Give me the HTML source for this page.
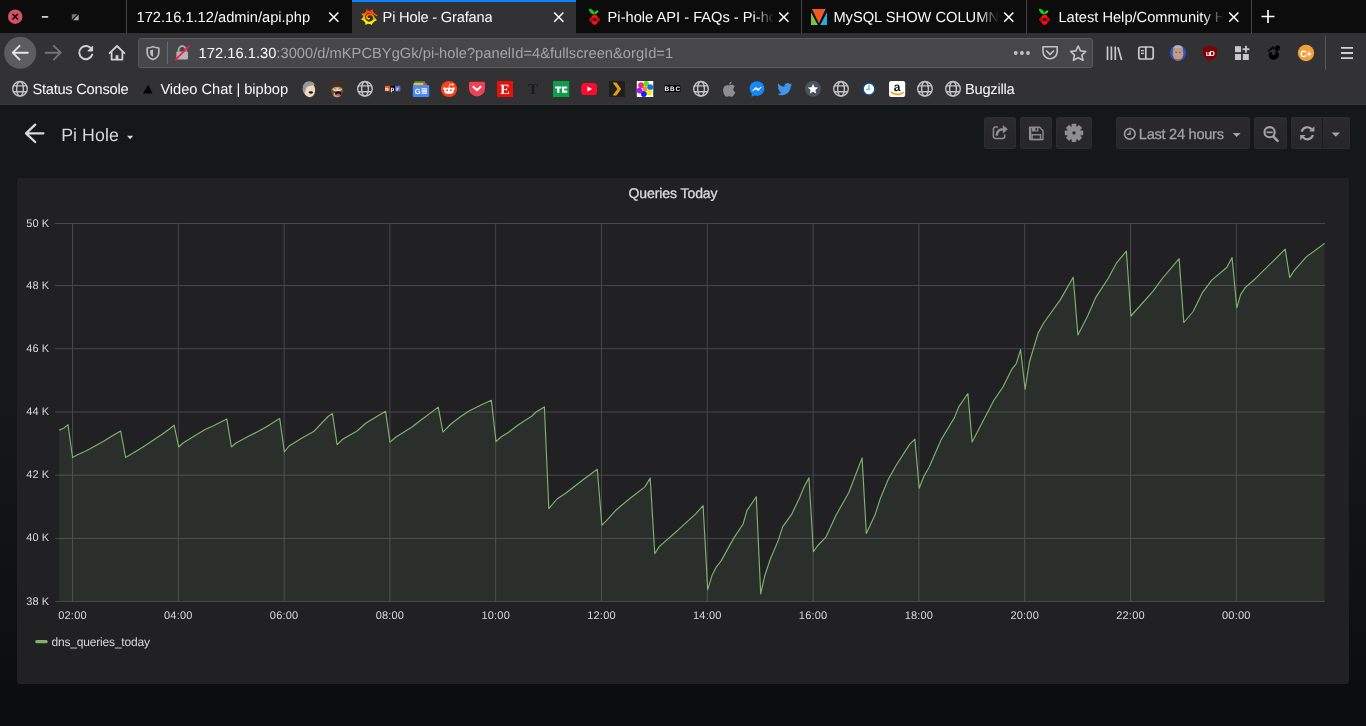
<!DOCTYPE html>
<html lang="en">
<head>
<meta charset="utf-8">
<title>Pi Hole - Grafana</title>
<style>
*{box-sizing:border-box;margin:0;padding:0}
html,body{width:1366px;height:726px;overflow:hidden;background:#0b0c0e}
body{position:relative;font-family:"Liberation Sans",sans-serif;color:#f9f9fa;-webkit-font-smoothing:antialiased;text-rendering:geometricPrecision}
#root{position:absolute;left:0;top:0;width:1366px;height:726px;will-change:transform}
.abs{position:absolute}
svg{position:absolute;overflow:visible}
/* ---------- Firefox chrome ---------- */
#tabbar{position:absolute;left:0;top:0;width:1366px;height:33px;background:#0c0c0d}
#navbar{position:absolute;left:0;top:33px;width:1366px;height:72px;background:#323234;border-bottom:1px solid #38383a}
#chromeline{position:absolute;left:0;top:105px;width:1366px;height:1px;background:#0c0c0d}
.tabsep{position:absolute;top:0;width:1px;height:33px;background:#454547}
.tab{position:absolute;top:0;height:33px;width:225px}
.tab.sel{background:#323234;width:224px}
.fade{-webkit-mask-image:linear-gradient(90deg,#000 0,#000 146px,transparent 166px);mask-image:linear-gradient(90deg,#000 0,#000 146px,transparent 166px)}
.tab.sel:before{content:"";position:absolute;left:0;top:0;width:100%;height:2px;background:#0a84ff}
.tt{position:absolute;top:9px;font-size:14.67px;line-height:19px;white-space:nowrap;color:#f9f9fa;overflow:hidden}
.tx{position:absolute;top:12px;width:10px;height:10px}
.ui{font-size:14.67px;line-height:19px;white-space:nowrap;color:#f9f9fa;position:absolute}
#urlbar{position:absolute;left:138px;top:5px;width:955px;height:30px;background:#474749;border:1px solid #5b5b5d;border-radius:3px}
/* ---------- Grafana ---------- */
#page{position:absolute;left:0;top:105px;width:1366px;height:621px;background:linear-gradient(180deg,#161719 0px,#161719 300px,#0b0c0e 621px)}
.gbtn{position:absolute;top:12px;height:32px;border:1px solid #2c2c2f;border-radius:2px;background:linear-gradient(180deg,#2b2b2e,#262628)}
#panel{position:absolute;left:17px;top:73px;width:1332px;height:506px;background:#212124;border-radius:3px}
.g{font-family:"Liberation Sans",sans-serif;color:#d8d9da;white-space:nowrap;position:absolute}
.yl{position:absolute;right:1317px;font-size:11px;line-height:13px;color:#d8d9da;white-space:nowrap}
.xl{position:absolute;width:60px;text-align:center;top:503px;font-size:11px;line-height:13px;letter-spacing:0.2px;color:#d8d9da;white-space:nowrap}
</style>
</head>
<body>
<div id="root">
<!-- ======= Firefox tab bar ======= -->
<div id="tabbar">
  <!-- window controls -->
  <svg width="126" height="33" viewBox="0 0 126 33" style="left:0;top:0">
    <circle cx="15.2" cy="16.7" r="7.2" fill="#d5525f"/>
    <path d="M12.4 13.9l5.6 5.6M18 13.9l-5.6 5.6" stroke="#1a0d10" stroke-width="1.7" fill="none"/>
    <rect x="41.8" y="16" width="6.4" height="1.8" fill="#c9c9ca"/>
    <path d="M71.8 19.8v-5.6h5.6z" fill="#77777a"/>
    <path d="M78.4 14.2v5.6h-5.6z" fill="#aaaaac" transform="translate(0.2,0.4)"/>
  </svg>
  <div class="tabsep" style="left:126px"></div>
  <div class="tab" style="left:127px"><span class="tt" style="left:9.5px">172.16.1.12/admin/api.php</span></div>
  <div class="tab sel" style="left:352px"><span class="tt" style="left:30.6px;letter-spacing:-0.2px">Pi Hole - Grafana</span></div>
  <div class="tab" style="left:577px"><span class="tt fade" style="left:30.6px;width:165px">Pi-hole API - FAQs - Pi-hole</span></div>
  <div class="tabsep" style="left:801px"></div>
  <div class="tab" style="left:802px"><span class="tt fade" style="left:31.4px;width:165px">MySQL SHOW COLUMNS FROM</span></div>
  <div class="tabsep" style="left:1026px"></div>
  <div class="tab" style="left:1027px"><span class="tt fade" style="left:31.4px;width:165px">Latest Help/Community Help</span></div>
  <div class="tabsep" style="left:1251px"></div>
</div>
<!-- ======= nav bar + bookmarks ======= -->
<div id="navbar">
  <div id="urlbar"></div>
  <span class="ui" style="left:198.6px;top:11.6px;letter-spacing:0.03px">172.16.1.30<span style="color:#a5a5a7">:3000/d/mKPCBYgGk/pi-hole?panelId=4&amp;fullscreen&amp;orgId=1</span></span>
  <span class="ui" style="left:32.4px;top:48px;letter-spacing:-0.25px">Status Console</span>
  <span class="ui" style="left:160.4px;top:48px;letter-spacing:-0.03px">Video Chat | bipbop</span>
  <span class="ui" style="left:965px;top:48px;letter-spacing:-0.25px">Bugzilla</span>
</div>
<div id="chromeline"></div>
<!--CHROMEICONS--><svg id="chromeicons" width="1366" height="105" viewBox="0 0 1366 105" style="left:0;top:0">
  <defs>
    <linearGradient id="grafg" gradientUnits="userSpaceOnUse" x1="0" y1="9" x2="0" y2="25">
      <stop offset="0" stop-color="#ff3300"/><stop offset="0.22" stop-color="#ff4a00"/><stop offset="0.5" stop-color="#ff9a00"/><stop offset="0.68" stop-color="#ffe800"/><stop offset="1" stop-color="#fff200"/>
    </linearGradient>
  </defs>
  <!-- tab favicons -->
  <g>
    <path d="M363.3 16.4L361.1 13.4L364.8 13.2ZM365.7 12.3L366.4 9.0L369.1 11.1ZM369.8 11.1L372.6 9.1L373.2 12.4ZM375.6 17.9L376.8 20.4L374.1 21.3ZM372.8 22.5L371.6 24.9L369.3 23.5ZM368.3 23.4L365.5 24.9L365.1 21.8ZM364.1 20.6L361.0 19.6L363.2 17.1Z" fill="url(#grafg)"/>
    <path d="M373.5 13.6A5.5 5.5 0 1 0 374.1 20.2" fill="none" stroke="url(#grafg)" stroke-width="2.3"/>
    <path d="M374.1 20.2 L374.0 17.7 L372.9 15.7 L371.1 14.4 L369.1 14.2 L367.5 15.1 L366.8 16.6 L367.1 18.1 L368.3 18.9 L369.3 18.6" fill="none" stroke="url(#grafg)" stroke-width="1.6" stroke-linejoin="round" stroke-linecap="round"/>
    <path d="M373.4 13.4Q375.2 14.2 376.8 15.7" fill="none" stroke="url(#grafg)" stroke-width="1.1" stroke-linecap="round"/>
  </g>
  <g transform="translate(594.6,17)">
      <path d="M-5.700 -8.200C-3.200 -8.600 0.200 -6.200 -0.300 -3C-1.100 -2.600 -2.300 -2.800 -3.200 -3.600C-4.800 -4.800 -5.700 -6.400 -5.700 -8.200Z" fill="#0fd012"/>
      <path d="M3.700 -6.400C3.500 -4.400 2 -2.700 -0.200 -2.800C-0.700 -4.600 1.500 -6.600 3.700 -6.400Z" fill="#12f016"/>
      <path d="M0 -1.700L4.300 2.600L0 6.900L-4.300 2.600Z" fill="#c00a0c" stroke="#c00a0c" stroke-width="2.600" stroke-linejoin="round"/>
      <ellipse cx="0" cy="-0.100" rx="2.700" ry="1.900" fill="#f41216"/>
      <ellipse cx="0" cy="5.500" rx="2.700" ry="2" fill="#ff0a0e"/>
      <path d="M-1.300 1.300L1.300 3.900M1.300 1.300L-1.300 3.900" stroke="#1a0505" stroke-width="1.300"/>
    </g>
  <g transform="translate(1044.6,17)">
      <path d="M-5.700 -8.200C-3.200 -8.600 0.200 -6.200 -0.300 -3C-1.100 -2.600 -2.300 -2.800 -3.200 -3.600C-4.800 -4.800 -5.700 -6.400 -5.700 -8.200Z" fill="#0fd012"/>
      <path d="M3.700 -6.400C3.500 -4.400 2 -2.700 -0.200 -2.800C-0.700 -4.600 1.500 -6.600 3.700 -6.400Z" fill="#12f016"/>
      <path d="M0 -1.700L4.300 2.600L0 6.900L-4.300 2.600Z" fill="#c00a0c" stroke="#c00a0c" stroke-width="2.600" stroke-linejoin="round"/>
      <ellipse cx="0" cy="-0.100" rx="2.700" ry="1.900" fill="#f41216"/>
      <ellipse cx="0" cy="5.500" rx="2.700" ry="2" fill="#ff0a0e"/>
      <path d="M-1.300 1.300L1.300 3.900M1.300 1.300L-1.300 3.900" stroke="#1a0505" stroke-width="1.300"/>
    </g>
  <g transform="translate(811,9)">
    <path d="M1 0H14.6L7.9 14.6Z" fill="#f05a22"/>
    <path d="M0 3.2V16H6.8Z" fill="#7dc242"/>
    <path d="M16 3.2V16H9.2Z" fill="#29a9e0"/>
  </g>
  <!-- tab close buttons -->
  <g transform="translate(333.8,17.1)" fill="none" stroke="#f9f9fa" stroke-width="1.6">
      <path d="M-4.6 -4.6L4.6 4.6M4.6 -4.6L-4.6 4.6"/>
    </g>
  <g transform="translate(558.8,17.1)" fill="none" stroke="#f9f9fa" stroke-width="1.6">
      <path d="M-4.6 -4.6L4.6 4.6M4.6 -4.6L-4.6 4.6"/>
    </g>
  <g transform="translate(783.8,17.1)" fill="none" stroke="#f9f9fa" stroke-width="1.6">
      <path d="M-4.6 -4.6L4.6 4.6M4.6 -4.6L-4.6 4.6"/>
    </g>
  <g transform="translate(1008.8,17.1)" fill="none" stroke="#f9f9fa" stroke-width="1.6">
      <path d="M-4.6 -4.6L4.6 4.6M4.6 -4.6L-4.6 4.6"/>
    </g>
  <g transform="translate(1233.8,17.1)" fill="none" stroke="#f9f9fa" stroke-width="1.6">
      <path d="M-4.6 -4.6L4.6 4.6M4.6 -4.6L-4.6 4.6"/>
    </g>
  <!-- new tab + -->
  <path d="M1261.5 16.5H1274.5M1268 10V23" stroke="#f9f9fa" stroke-width="1.7" fill="none"/>
  <!-- nav buttons -->
  <circle cx="20.2" cy="52.7" r="16" fill="#5d5d5f"/>
  <path d="M27.8 52.7H13M19.6 45.8L12.7 52.7L19.6 59.6" fill="none" stroke="#e4e4e5" stroke-width="1.9" stroke-linejoin="round" stroke-linecap="round"/>
  <path d="M45.6 52.7H60.4M53.8 45.8L60.7 52.7L53.8 59.6" fill="none" stroke="#747476" stroke-width="1.9" stroke-linejoin="round" stroke-linecap="round"/>
  <g fill="none" stroke="#d2d2d4" stroke-width="1.9" stroke-linecap="round" stroke-linejoin="round">
    <path d="M91.6 49.2A6.6 6.6 0 1 0 92.2 54.6"/>
  </g>
  <path d="M92.600 46.200V51H87.800Z" fill="#d2d2d4" stroke="#d2d2d4" stroke-width="1" stroke-linejoin="round"/>
  <g fill="none" stroke="#d2d2d4" stroke-width="1.8" stroke-linejoin="round" stroke-linecap="round">
    <path d="M109.6 53.2L117 46L124.4 53.2"/>
    <path d="M111.6 52.4V59.6H122.4V52.4"/>
  </g>
  <rect x="115.6" y="55.2" width="2.8" height="4" fill="#d2d2d4"/>
  <!-- urlbar icons -->
  <g fill="none" stroke="#c0c0c2" stroke-width="1.6" stroke-linejoin="round">
    <path d="M153 46.6C155 47.6 157 48 158.8 48V52.4C158.8 55.8 156.4 58.4 153 59.6C149.600 58.4 147.2 55.800 147.2 52.400V48C149 48 151 47.600 153 46.600Z"/>
  </g>
  <path d="M153 49.6V56.8C151.200 55.900 150.200 54.400 150.200 52.400V50.200C151.300 50.200 152.200 50 153 49.600Z" fill="#c0c0c2"/>
  <rect x="167" y="42" width="1" height="22" fill="#5f6e8a"/>
  <g>
    <path d="M178.600 51.400V49.800A3.600 3.600 0 0 1 185.800 49.800V51.400" fill="none" stroke="#b4b4b6" stroke-width="1.7"/>
    <rect x="176.400" y="51.400" width="11.600" height="8" rx="1" fill="#b4b4b6"/>
    <path d="M175.600 59.600L188.800 46.400" stroke="#ff1747" stroke-width="1.7" stroke-linecap="round"/>
  </g>
  <circle cx="1015.8" cy="53" r="1.9" fill="#c4c4c6"/><circle cx="1021.9" cy="53" r="1.9" fill="#c4c4c6"/><circle cx="1028" cy="53" r="1.9" fill="#c4c4c6"/>
  <g fill="none" stroke="#c4c4c6" stroke-width="1.6" stroke-linejoin="round" stroke-linecap="round">
    <path d="M1043 46.800H1057.200V51.600A7.100 7.100 0 0 1 1043 51.600Z"/>
    <path d="M1046.600 51L1050.100 54.400L1053.600 51"/>
    <path d="M1078.200 46L1080.500 50.900L1085.800 51.500L1081.900 55.100L1083 60.300L1078.200 57.700L1073.400 60.300L1074.500 55.100L1070.600 51.500L1075.900 50.900Z"/>
  </g>
  <!-- toolbar icons -->
  <g fill="none" stroke="#c9c9cb" stroke-width="1.7" stroke-linecap="butt">
    <path d="M1107.500 46.400V60M1111.400 46.400V60M1115.300 46.400V60M1118 47.200L1121.600 60"/>
  </g>
  <g fill="none" stroke="#c9c9cb" stroke-width="1.7">
    <rect x="1138.800" y="47" width="14.400" height="12" rx="2"/>
    <path d="M1145.800 47V59"/>
    <path d="M1141 50.600H1144M1141 53.400H1144" stroke-width="1.100"/>
  </g>
  <g>
    <circle cx="1178" cy="53" r="8.100" fill="#2b55b8"/>
    <ellipse cx="1178" cy="53.800" rx="5.400" ry="6.700" fill="#c49a86"/>
    <path d="M1172.800 51.500C1172.800 46.500 1175 45.200 1178 45.200C1181 45.200 1183.200 46.500 1183.200 51.500C1182.600 48.700 1181 47.700 1178 47.700C1175 47.700 1173.400 48.700 1172.800 51.500Z" fill="#b9b5b2"/>
    <path d="M1175.200 58.300Q1178 60.300 1180.800 58.300L1180.300 60.300Q1178 61.600 1175.700 60.300Z" fill="#8a6f63"/>
    <path d="M1175.300 52.300h1.600M1179.100 52.300h1.600" stroke="#5a4038" stroke-width="0.900"/>
  </g>
  <g>
    <path d="M1210 45.200C1212.400 46.800 1214.600 47.400 1217 47.400V52.600C1217 56.800 1214 59.400 1210 60.800C1206 59.400 1203 56.800 1203 52.600V47.400C1205.400 47.400 1207.600 46.800 1210 45.200Z" fill="#800007"/>
    <text x="1210" y="55.600" font-family="Liberation Sans, sans-serif" font-size="7.400" font-weight="700" fill="#fff" text-anchor="middle" letter-spacing="-0.6">uD</text>
  </g>
  <g fill="#c9c9cb">
    <rect x="1235" y="46.200" width="6" height="6"/><rect x="1235" y="54" width="6" height="6"/><rect x="1242.800" y="54" width="6" height="6"/>
    <rect x="1242.600" y="48.300" width="6.800" height="1.800"/><rect x="1245.100" y="45.800" width="1.800" height="6.800"/>
  </g>
  <g fill="#000">
    <path d="M1274.200 51.200C1278.600 51 1280.200 54.600 1278 57.600C1276 60.200 1272.400 60.400 1270.200 58.400C1267.800 56.200 1268.400 52 1271.800 51.400C1270.800 53.400 1272.600 55.400 1274.600 54.800C1276.200 54.300 1275.800 51.800 1274.200 51.200Z"/>
    <ellipse cx="1277.400" cy="48.200" rx="2.300" ry="2.900" transform="rotate(25 1277.400 48.200)"/>
    <ellipse cx="1273.400" cy="47.800" rx="1.200" ry="1.700"/><ellipse cx="1270.800" cy="48.800" rx="1" ry="1.500"/><ellipse cx="1268.800" cy="50.600" rx="0.900" ry="1.300"/>
  </g>
  <g>
    <circle cx="1306" cy="53" r="8.200" fill="#f0a13c"/>
    <text x="1305.800" y="56.600" font-family="Liberation Sans, sans-serif" font-size="9.200" font-weight="700" fill="#fff" text-anchor="middle" letter-spacing="-0.5">C+</text>
  </g>
  <rect x="1325" y="36" width="1" height="34" fill="#58585a"/>
  <path d="M1341 47.800H1353M1341 53H1353M1341 58.200H1353" stroke="#d2d2d4" stroke-width="1.800" fill="none"/>
  <!-- bookmarks -->
  <g transform="translate(20,88.800)" fill="none" stroke="#c4c4c6" stroke-width="1.4">
      <circle cx="0" cy="0" r="7.3"/>
      <ellipse cx="0" cy="0" rx="3.4" ry="7.3"/>
      <path d="M-6.6 -2.9H6.6M-6.6 2.9H6.6"/>
    </g>
  <path d="M142.800 93.600L148.200 84.800L152.600 93.600Z" fill="#060607"/>
  <!-- face 1 -->
  <g>
    <ellipse cx="309.200" cy="89.600" rx="5.900" ry="7.600" fill="#ead9bf" transform="rotate(-12 309.200 89.600)"/>
    <path d="M303.400 92.400C302.200 89 302.400 85.200 305 82.800C307.800 80.400 312.600 80.800 315 84.400C313.600 84.600 312.800 85.200 311.800 85.400C309.800 85.600 307.800 86 306.600 87.600C305.600 89.200 305.600 91 304.600 92.600Z" fill="#98989a"/>
    <ellipse cx="310.800" cy="92.400" rx="2.200" ry="1.100" fill="#14060a"/>
    <ellipse cx="311.100" cy="92.900" rx="0.900" ry="0.700" fill="#5a0a1c"/>
  </g>
  <!-- face 2 -->
  <g>
    <ellipse cx="337" cy="89.600" rx="6.400" ry="7.600" fill="#6b4b37"/>
    <ellipse cx="337" cy="94.800" rx="3.600" ry="2.400" fill="#c9a78e"/>
    <path d="M330.600 92C329.800 88 330.200 84.600 332.800 82.400C335.400 80.400 339.600 80.600 342 82.800C344.200 84.800 344.200 88.400 343.800 91.200C343.400 88.800 342.400 87.600 340.400 87C338.200 86.400 335.400 86.400 333.400 87.200C331.600 88 331 89.800 330.600 92Z" fill="#452f1d"/>
    <ellipse cx="337.200" cy="89.200" rx="4.600" ry="2" fill="#e6cfba"/>
    <path d="M333.800 88.800h2.600M338.400 88.800h2.600" stroke="#8a6a58" stroke-width="0.900"/>
    <ellipse cx="338.200" cy="93.400" rx="3.100" ry="1.900" fill="#0c0808"/>
    <ellipse cx="338.200" cy="94.300" rx="2.100" ry="0.900" fill="#e64848"/>
  </g>
  <g transform="translate(365,88.800)" fill="none" stroke="#c4c4c6" stroke-width="1.4">
      <circle cx="0" cy="0" r="7.3"/>
      <ellipse cx="0" cy="0" rx="3.4" ry="7.3"/>
      <path d="M-6.6 -2.9H6.6M-6.6 2.9H6.6"/>
    </g>
  <!-- npr -->
  <rect x="385" y="85.800" width="5.200" height="5.400" fill="#e9561e"/><rect x="390.200" y="85.800" width="5" height="5.400" fill="#111"/><rect x="395.200" y="85.800" width="5.200" height="5.400" fill="#5a6ac6"/>
  <text x="392.700" y="90.600" font-family="Liberation Sans, sans-serif" font-size="6" font-weight="700" fill="#fff" text-anchor="middle" letter-spacing="1.900">npr</text>
  <!-- google news -->
  <g>
    <rect x="414.200" y="81.200" width="11" height="6" rx="1" fill="#2fa24f"/>
    <path d="M418 82L427 83.600V88H418Z" fill="#e94235"/>
    <rect x="413.400" y="83" width="10" height="5" rx="1" fill="#f9bb2d"/>
    <rect x="412.800" y="85" width="16.400" height="12" rx="1.200" fill="#4c8bf5"/>
    <text x="417.700" y="94.300" font-family="Liberation Sans, sans-serif" font-size="7.500" font-weight="700" fill="#fff" text-anchor="middle">G</text>
    <path d="M421.600 88.800H427M421.600 91H427M421.600 93.200H427" stroke="#fff" stroke-width="1.300"/>
  </g>
  <!-- reddit -->
  <g>
    <circle cx="449" cy="89" r="8.100" fill="#ff3f18"/>
    <ellipse cx="449" cy="90.700" rx="4.800" ry="3.300" fill="#fff"/>
    <circle cx="444.400" cy="88.600" r="1.300" fill="#fff"/><circle cx="453.600" cy="88.600" r="1.300" fill="#fff"/>
    <circle cx="452.600" cy="84.600" r="1.100" fill="#fff"/>
    <path d="M449 87.400L449.800 84.200L452.400 84.700" stroke="#fff" stroke-width="0.800" fill="none"/>
    <circle cx="447.100" cy="90.200" r="0.900" fill="#ff3f18"/><circle cx="450.900" cy="90.200" r="0.900" fill="#ff3f18"/>
  </g>
  <!-- pocket -->
  <path d="M470.400 81.800H483.600A1.400 1.400 0 0 1 485 83.200V88.400A8 8 0 0 1 469 88.400V83.200A1.400 1.400 0 0 1 470.400 81.800Z" fill="#ef4056"/>
  <path d="M473.300 86.800L477 90.300L480.700 86.800" stroke="#fff" stroke-width="1.900" fill="none" stroke-linecap="round" stroke-linejoin="round"/>
  <!-- economist -->
  <rect x="497" y="81" width="16" height="16" fill="#e3120b"/>
  <text x="505" y="94.200" font-family="Liberation Serif, serif" font-size="14" font-weight="700" fill="#fff" text-anchor="middle">E</text>
  <!-- nyt -->
  <text x="533" y="94.400" font-family="Liberation Serif, serif" font-size="15" font-weight="700" fill="#1a1a1b" text-anchor="middle">T</text>
  <!-- techcrunch -->
  <rect x="553" y="81" width="16.200" height="16" fill="#0b9f4b"/>
  <path d="M555.200 86.400H561.400V88.600H559.400V92.800H557.200V88.600H555.200ZM562 86.400H567.200V88.600H564.200V90.600H567.200V92.800H562Z" fill="#fff"/>
  <!-- youtube -->
  <rect x="581.200" y="83" width="15.800" height="12" rx="3.600" fill="#ff0a2d"/>
  <path d="M587.400 86.400L592 89L587.400 91.600Z" fill="#fff"/>
  <!-- plex -->
  <rect x="609" y="81" width="16" height="16" fill="#1f1f21"/>
  <path d="M612.600 82.400H616.400L621.200 89L616.400 95.600H612.600L617.400 89Z" fill="#e5a00d"/>
  <!-- colour dots -->
  <rect x="636.800" y="81" width="16.400" height="16" fill="#fff"/>
  <circle cx="641" cy="85.200" r="2.900" fill="#f0268c"/><circle cx="646.200" cy="83.800" r="2.900" fill="#5fe01c"/><circle cx="650.200" cy="87.200" r="2.900" fill="#1c6cf0"/>
  <circle cx="649.200" cy="92.400" r="2.900" fill="#e6f01c"/><circle cx="643.800" cy="94" r="2.900" fill="#1c1cf0"/><circle cx="639.600" cy="90.600" r="2.900" fill="#a01cf0"/>
  <circle cx="645" cy="89" r="2.400" fill="#f08c1c"/>
  <!-- bbc -->
  <rect x="664.600" y="85.200" width="15.800" height="6.800" fill="#000"/>
  <text x="672.700" y="91.200" font-family="Liberation Sans, sans-serif" font-size="6.400" font-weight="700" fill="#fff" text-anchor="middle" letter-spacing="0.900">BBC</text>
  <g transform="translate(701,88.800)" fill="none" stroke="#c4c4c6" stroke-width="1.4">
      <circle cx="0" cy="0" r="7.3"/>
      <ellipse cx="0" cy="0" rx="3.4" ry="7.3"/>
      <path d="M-6.6 -2.9H6.6M-6.6 2.9H6.6"/>
    </g>
  <!-- apple -->
  <g fill="#8e8e90">
    <path d="M729.200 85.400C730.400 84.600 731.800 84.400 733 85C733.800 85.400 734.400 86 734.800 86.600C733.200 87.600 732.800 89.800 734 91.200C734.400 91.700 734.800 92 735.300 92.200C734.700 93.800 733.900 95.200 732.800 96.200C732 96.900 731 96.800 730.200 96.400C729.400 96.100 728.600 96.100 727.800 96.400C727 96.800 726.200 96.900 725.500 96.200C723.500 94.200 722.500 90.800 723.400 88.200C724 86.400 725.600 85.200 727.200 85.200C728 85.200 728.600 85.500 729.200 85.400Z"/>
    <path d="M731.600 81.400C731.800 82.800 730.800 84.400 729.200 84.800C729 83.400 730.200 81.800 731.600 81.400Z"/>
  </g>
  <!-- messenger -->
  <circle cx="757" cy="88.600" r="7.400" fill="#1787fb"/>
  <path d="M751.800 93.600L751.600 96.800L754.800 95.200Z" fill="#1787fb"/>
  <path d="M752.600 90.800L756 87.200L758 89.200L761.400 87L758 90.800L756 88.800Z" fill="#fff" stroke="#fff" stroke-width="0.700" stroke-linejoin="round"/>
  <!-- twitter -->
  <path d="M791.600 84.200C791 84.500 790.400 84.700 789.800 84.800C790.500 84.400 791 83.700 791.200 83C790.600 83.400 789.900 83.600 789.200 83.800C788 82.500 785.900 82.500 784.700 83.700C783.900 84.500 783.600 85.600 783.900 86.600C781.400 86.500 779.100 85.300 777.600 83.400C776.800 84.800 777.200 86.600 778.600 87.500C778.100 87.500 777.600 87.300 777.200 87.100C777.200 88.600 778.200 89.900 779.700 90.200C779.200 90.300 778.800 90.300 778.300 90.200C778.700 91.500 779.900 92.400 781.200 92.400C779.900 93.400 778.300 93.900 776.700 93.700C778.100 94.600 779.700 95 781.400 95C787 95 790.100 90.400 790.100 86.400V86C790.700 85.600 791.200 85 791.600 84.200Z" fill="#3f96ec" transform="translate(0.600,0.200)"/>
  <!-- star -->
  <circle cx="813" cy="88.800" r="8" fill="#49525d"/>
  <path d="M813 83.800L814.500 87.200L818.200 87.600L815.400 90L816.200 93.600L813 91.700L809.800 93.600L810.600 90L807.800 87.600L811.500 87.200Z" fill="#fff"/>
  <g transform="translate(841,88.800)" fill="none" stroke="#c4c4c6" stroke-width="1.4">
      <circle cx="0" cy="0" r="7.3"/>
      <ellipse cx="0" cy="0" rx="3.4" ry="7.3"/>
      <path d="M-6.6 -2.9H6.6M-6.6 2.9H6.6"/>
    </g>
  <!-- clock -->
  <circle cx="869" cy="89" r="6" fill="#fff" stroke="#0f4c81" stroke-width="1.700"/>
  <path d="M869 84.800V89.400H866" fill="none" stroke="#79b6ec" stroke-width="1.500"/>
  <!-- amazon -->
  <rect x="889" y="81" width="16.200" height="16" rx="2.200" fill="#fff"/>
  <text x="897" y="91.200" font-family="Liberation Sans, sans-serif" font-size="12" font-weight="700" fill="#111" text-anchor="middle">a</text>
  <path d="M891.400 92.400Q897.400 96.400 903.200 92.600" stroke="#f90" stroke-width="1.500" fill="none" stroke-linecap="round"/>
  <g transform="translate(925,88.800)" fill="none" stroke="#c4c4c6" stroke-width="1.4">
      <circle cx="0" cy="0" r="7.3"/>
      <ellipse cx="0" cy="0" rx="3.4" ry="7.3"/>
      <path d="M-6.6 -2.9H6.6M-6.6 2.9H6.6"/>
    </g>
  <g transform="translate(953,88.800)" fill="none" stroke="#c4c4c6" stroke-width="1.4">
      <circle cx="0" cy="0" r="7.3"/>
      <ellipse cx="0" cy="0" rx="3.4" ry="7.3"/>
      <path d="M-6.6 -2.9H6.6M-6.6 2.9H6.6"/>
    </g>
</svg>
<!--/CHROMEICONS-->
<!-- ======= Grafana page ======= -->
<div id="page">
  <span class="g" style="left:61.2px;top:19px;font-size:17.8px;line-height:22px;letter-spacing:0.05px">Pi Hole</span>
  <div class="gbtn" style="left:984px;width:32px"></div>
  <div class="gbtn" style="left:1020px;width:32px"></div>
  <div class="gbtn" style="left:1056px;width:36px"></div>
  <div class="gbtn" style="left:1116px;width:134px"></div>
  <div class="gbtn" style="left:1254px;width:33px"></div>
  <div class="gbtn" style="left:1291px;width:59px"></div>
  <span class="g" style="left:1138.8px;top:21px;font-size:14.6px;line-height:18px;letter-spacing:-0.27px;color:#a4a4a5;-webkit-text-stroke:0.25px #a4a4a5">Last 24 hours</span>
  <!--GRAFICONS--><svg id="graficons" width="1366" height="80" viewBox="0 105 1366 80" style="left:0;top:0">
  <!-- back arrow -->
  <path d="M43.400 133.300H26.200M35.200 124.600L26 133.300L35.200 142" fill="none" stroke="#d8d9da" stroke-width="2.300" stroke-linecap="round" stroke-linejoin="round"/>
  <!-- title caret -->
  <path d="M127 135.800H133.200L130.100 139.300Z" fill="#d8d9da"/>
  <!-- share -->
  <g fill="none" stroke="#8e8e8e">
    <path d="M997.800 126.900H995.600A2.200 2.200 0 0 0 993.400 129.100V136.200A2.200 2.200 0 0 0 995.600 138.400H1002.600A2.200 2.200 0 0 0 1004.800 136.200V134.600" stroke-width="1.500"/>
    <path d="M1003.400 129.300C999.400 129.300 996.800 131.600 996.700 135.600" stroke-width="2.600"/>
  </g>
  <path d="M1002.800 124.900L1007.900 129.300L1002.800 133.700Z" fill="#8e8e8e"/>
  <!-- save -->
  <g>
    <path d="M1029.700 127.300H1039.600L1043 130.700V139.500H1029.700Z" fill="none" stroke="#8e8e8e" stroke-width="1.400" stroke-linejoin="round"/>
    <rect x="1032" y="127.300" width="6.400" height="4.200" fill="#8e8e8e"/>
    <rect x="1035.400" y="128.100" width="1.700" height="2.400" fill="#29292c"/>
    <rect x="1032.100" y="134.700" width="8.400" height="4.800" fill="none" stroke="#8e8e8e" stroke-width="1.400"/>
    <rect x="1029.700" y="127.300" width="1.600" height="12.200" fill="#8e8e8e"/>
  </g>
  <!-- gear -->
  <g transform="translate(1074,132.900)" fill="#8e8e8e">
    <circle r="7"/>
    <g>
      <rect x="-2.300" y="-9.200" width="4.600" height="18.400" rx="0.600"/>
      <rect x="-2.300" y="-9.200" width="4.600" height="18.400" rx="0.600" transform="rotate(45)"/>
      <rect x="-2.300" y="-9.200" width="4.600" height="18.400" rx="0.600" transform="rotate(90)"/>
      <rect x="-2.300" y="-9.200" width="4.600" height="18.400" rx="0.600" transform="rotate(135)"/>
    </g>
    <circle r="1.700" fill="#29292c"/>
  </g>
  <!-- clock -->
  <circle cx="1129.800" cy="133.900" r="5.300" fill="none" stroke="#a4a4a5" stroke-width="1.500"/>
  <path d="M1130 130.600V134.300H1127.200" fill="none" stroke="#a4a4a5" stroke-width="1.400"/>
  <!-- carets -->
  <path d="M1232.600 132.900H1240.800L1236.700 137.100Z" fill="#a4a4a5"/>
  <path d="M1331.600 132.600H1340L1335.800 136.800Z" fill="#a4a4a5"/>
  <!-- zoom out -->
  <circle cx="1269.600" cy="132.200" r="5.100" fill="none" stroke="#a4a4a5" stroke-width="2.100"/>
  <path d="M1273.600 136.800L1277.600 140.800" stroke="#a4a4a5" stroke-width="2.600" stroke-linecap="round"/>
  <path d="M1266.600 132.300H1272.700" stroke="#a4a4a5" stroke-width="1.700"/>
  <!-- refresh -->
  <g fill="none" stroke="#a4a4a5" stroke-width="2.200">
    <path d="M1301.700 131.600A5.800 5.800 0 0 1 1311.700 129.300"/>
    <path d="M1312.900 135A5.800 5.800 0 0 1 1302.900 137.300"/>
  </g>
  <path d="M1314.400 126.300V131.600H1309.100Z" fill="#a4a4a5"/>
  <path d="M1300.200 140.300V135H1305.500Z" fill="#a4a4a5"/>
  <rect x="1322" y="118" width="1" height="30" fill="#1d1d20"/>
</svg>
<!--/GRAFICONS-->
  <div id="panel">
    <span class="g" style="left:0;width:1312px;text-align:center;top:5.5px;font-size:14px;line-height:18px;letter-spacing:-0.08px;-webkit-text-stroke:0.35px #d8d9da">Queries Today</span>
    <!--CHART--><svg width="1332" height="506" viewBox="0 0 1332 506" style="left:0;top:0">
    <path d="M38 45.5H1308M38 107.5H1308M38 170.7H1308M38 234H1308M38 297.2H1308M38 360.4H1308M38 423.5H1308M55.5 45V424M161.3 45V424M267.1 45V424M372.9 45V424M478.7 45V424M584.5 45V424M690.3 45V424M796.1 45V424M901.9 45V424M1007.7 45V424M1113.5 45V424M1219.3 45V424" stroke="#48484b" stroke-width="1" fill="none"/>
    <path d="M42.2 252.1 L46.6 250.3 L51 246.6 L55.6 279.5 L60.5 276.7 L69 273 L78 268 L87 263 L95 258 L103.7 253 L108.6 279.5 L117 274.5 L126 269 L135 263 L144 257 L152.5 251 L157.1 247.2 L161.7 269 L166 265 L179 257 L188 251.5 L196 248 L209.8 240.9 L214.4 269 L219 265 L232 258 L241 253.5 L249 249 L262.7 240.4 L267.4 274 L272 268 L285 260 L296.6 253.6 L311 238.5 L315.5 235.6 L320.1 266.6 L326 261 L340 253 L349 245 L368.6 233.3 L373 264.1 L379 259 L395 249 L404 242 L421.3 229.1 L425.9 254.2 L434 246 L443 239 L452 233 L465 226.5 L474.4 222.3 L479 263.6 L484 259 L492 254 L501 247 L515 238 L519 234 L527.4 228.9 L531.8 330.6 L540 321 L549 315 L558 308 L567 301 L580.3 291.3 L584.9 347.2 L589.5 342.7 L599.4 331.7 L612.5 320.8 L627.9 308.9 L633.2 300.1 L637.8 375.7 L642.2 368.6 L660.9 352.2 L678.4 336.1 L686.1 327.6 L690.7 411.7 L695.1 397.2 L699.3 389.1 L704.1 382.9 L716.9 359.9 L726.1 346 L730 332.4 L739.3 318.8 L743.7 415.9 L747.6 398.3 L753.1 381.8 L761.4 362.1 L765.6 348.9 L774.6 336.4 L782.8 319.2 L787.1 308.7 L792 299.9 L796.4 373.7 L800.8 367.5 L809.1 358.8 L819 337.2 L831.7 314.8 L845.1 279.9 L849.3 355.5 L858.1 336.8 L863 321.3 L871.2 301.5 L879.5 286.7 L892.6 266.4 L897.9 261.2 L902.2 310.3 L906.9 298.2 L912.1 289.3 L924.1 261.8 L937.3 239.9 L941.7 228.9 L950.9 215.5 L955.1 264 L976.9 222.3 L986.1 208.7 L994.9 191.1 L999.3 185.6 L1003.6 171.6 L1008.1 211.3 L1012.4 184 L1021.1 155.1 L1027 144.5 L1043.4 121.6 L1056.2 99.3 L1060.9 156.9 L1070.3 138.7 L1078.5 119.9 L1091.4 100 L1099.6 84.8 L1109.4 73.1 L1113.9 138 L1135.9 113.4 L1145.3 100.5 L1162.1 80.6 L1166.8 144.5 L1176.2 133.5 L1185.1 115.2 L1194.5 102.4 L1209.7 89.5 L1215.1 79.6 L1219.8 129.8 L1223.7 116.4 L1228.4 109.4 L1237.8 101.2 L1268.2 71.2 L1272.7 99.6 L1276.4 93.7 L1289.3 78.9 L1307.6 65.4 L1307.6 423 L42.2 423 Z" fill="#7eb26d" fill-opacity="0.1" stroke="none"/>
    <path d="M42.2 252.1 L46.6 250.3 L51 246.6 L55.6 279.5 L60.5 276.7 L69 273 L78 268 L87 263 L95 258 L103.7 253 L108.6 279.5 L117 274.5 L126 269 L135 263 L144 257 L152.5 251 L157.1 247.2 L161.7 269 L166 265 L179 257 L188 251.5 L196 248 L209.8 240.9 L214.4 269 L219 265 L232 258 L241 253.5 L249 249 L262.7 240.4 L267.4 274 L272 268 L285 260 L296.6 253.6 L311 238.5 L315.5 235.6 L320.1 266.6 L326 261 L340 253 L349 245 L368.6 233.3 L373 264.1 L379 259 L395 249 L404 242 L421.3 229.1 L425.9 254.2 L434 246 L443 239 L452 233 L465 226.5 L474.4 222.3 L479 263.6 L484 259 L492 254 L501 247 L515 238 L519 234 L527.4 228.9 L531.8 330.6 L540 321 L549 315 L558 308 L567 301 L580.3 291.3 L584.9 347.2 L589.5 342.7 L599.4 331.7 L612.5 320.8 L627.9 308.9 L633.2 300.1 L637.8 375.7 L642.2 368.6 L660.9 352.2 L678.4 336.1 L686.1 327.6 L690.7 411.7 L695.1 397.2 L699.3 389.1 L704.1 382.9 L716.9 359.9 L726.1 346 L730 332.4 L739.3 318.8 L743.7 415.9 L747.6 398.3 L753.1 381.8 L761.4 362.1 L765.6 348.9 L774.6 336.4 L782.8 319.2 L787.1 308.7 L792 299.9 L796.4 373.7 L800.8 367.5 L809.1 358.8 L819 337.2 L831.7 314.8 L845.1 279.9 L849.3 355.5 L858.1 336.8 L863 321.3 L871.2 301.5 L879.5 286.7 L892.6 266.4 L897.9 261.2 L902.2 310.3 L906.9 298.2 L912.1 289.3 L924.1 261.8 L937.3 239.9 L941.7 228.9 L950.9 215.5 L955.1 264 L976.9 222.3 L986.1 208.7 L994.9 191.1 L999.3 185.6 L1003.6 171.6 L1008.1 211.3 L1012.4 184 L1021.1 155.1 L1027 144.5 L1043.4 121.6 L1056.2 99.3 L1060.9 156.9 L1070.3 138.7 L1078.5 119.9 L1091.4 100 L1099.6 84.8 L1109.4 73.1 L1113.9 138 L1135.9 113.4 L1145.3 100.5 L1162.1 80.6 L1166.8 144.5 L1176.2 133.5 L1185.1 115.2 L1194.5 102.4 L1209.7 89.5 L1215.1 79.6 L1219.8 129.8 L1223.7 116.4 L1228.4 109.4 L1237.8 101.2 L1268.2 71.2 L1272.7 99.6 L1276.4 93.7 L1289.3 78.9 L1307.6 65.4" fill="none" stroke="#7eb26d" stroke-width="1.15" stroke-linejoin="round"/>
    <rect x="18.2" y="461.9" width="12.5" height="3.4" rx="1.6" fill="#7eb26d"/>
    </svg>
    <span class="yl" style="top:40px;right:1300px">50 K</span>
    <span class="yl" style="top:102px;right:1300px">48 K</span>
    <span class="yl" style="top:165px;right:1300px">46 K</span>
    <span class="yl" style="top:228px;right:1300px">44 K</span>
    <span class="yl" style="top:291px;right:1300px">42 K</span>
    <span class="yl" style="top:354px;right:1300px">40 K</span>
    <span class="yl" style="top:418px;right:1300px">38 K</span>
    <span class="xl" style="left:25.5px;top:432px">02:00</span>
    <span class="xl" style="left:131.3px;top:432px">04:00</span>
    <span class="xl" style="left:237.1px;top:432px">06:00</span>
    <span class="xl" style="left:342.9px;top:432px">08:00</span>
    <span class="xl" style="left:448.7px;top:432px">10:00</span>
    <span class="xl" style="left:554.5px;top:432px">12:00</span>
    <span class="xl" style="left:660.3px;top:432px">14:00</span>
    <span class="xl" style="left:766.1px;top:432px">16:00</span>
    <span class="xl" style="left:871.9px;top:432px">18:00</span>
    <span class="xl" style="left:977.7px;top:432px">20:00</span>
    <span class="xl" style="left:1083.5px;top:432px">22:00</span>
    <span class="xl" style="left:1189.3px;top:432px">00:00</span><!--/CHART-->
    <span class="g" style="left:34.6px;top:457px;font-size:12px;line-height:14px;letter-spacing:-0.19px">dns_queries_today</span>
  </div>
</div>
</div>
</body>
</html>
